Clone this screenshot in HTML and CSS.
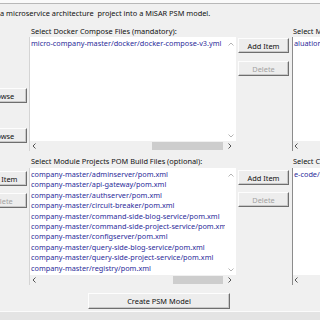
FILE: index.html
```html
<!DOCTYPE html>
<html lang="en">
<head>
<meta charset="utf-8">
<title>MiSAR PSM</title>
<link rel="stylesheet" href="styles.css">
</head>
<body>
<div class="window">
  <div class="topbar"></div>
  <p class="intro">a microservice architecture&nbsp; project into a MiSAR PSM model.</p>
  <div class="main">
    <div class="side">
      <button class="btn browse1">Browse</button>
      <button class="btn browse2">Browse</button>
      <button class="btn add2">Add Item</button>
      <button class="btn del2" disabled>Delete</button>
    </div>

    <div class="label l1">Select Docker Compose Files (mandatory):</div>
    <div class="listbox lb1">
      <ul class="items">
        <li>micro-company-master/docker/docker-compose-v3.yml</li>
      </ul>
      <div class="vscroll">
        <svg class="chev" width="6" height="4" viewBox="0 0 6 4"><path d="M0.5 3.5 L3 1 L5.5 3.5" fill="none" stroke="#b4b4b4" stroke-width="1"/></svg>
        <svg class="chev" width="6" height="4" viewBox="0 0 6 4"><path d="M0.5 0.5 L3 3 L5.5 0.5" fill="none" stroke="#b4b4b4" stroke-width="1"/></svg>
      </div>
      <div class="hscroll">
        <svg class="harrow" width="4" height="6" viewBox="0 0 4 6"><path d="M3.5 0.5 L1 3 L3.5 5.5" fill="none" stroke="#555" stroke-width="1"/></svg>
        <div class="track"><div class="thumb" style="margin-left:114px;width:71px"></div></div>
        <svg class="harrow" width="4" height="6" viewBox="0 0 4 6"><path d="M0.5 0.5 L3 3 L0.5 5.5" fill="none" stroke="#555" stroke-width="1"/></svg>
      </div>
    </div>

    <div class="label l2">Select Module Projects POM Build Files (optional):</div>
    <div class="listbox lb2">
      <ul class="items">
        <li>company-master/adminserver/pom.xml</li>
        <li>company-master/api-gateway/pom.xml</li>
        <li>company-master/authserver/pom.xml</li>
        <li>company-master/circuit-breaker/pom.xml</li>
        <li>company-master/command-side-blog-service/pom.xml</li>
        <li>company-master/command-side-project-service/pom.xml</li>
        <li>company-master/configserver/pom.xml</li>
        <li>company-master/query-side-blog-service/pom.xml</li>
        <li>company-master/query-side-project-service/pom.xml</li>
        <li>company-master/registry/pom.xml</li>
      </ul>
      <div class="vscroll">
        <svg class="chev" width="6" height="4" viewBox="0 0 6 4"><path d="M0.5 3.5 L3 1 L5.5 3.5" fill="none" stroke="#b4b4b4" stroke-width="1"/></svg>
        <svg class="chev" width="6" height="4" viewBox="0 0 6 4"><path d="M0.5 0.5 L3 3 L5.5 0.5" fill="none" stroke="#b4b4b4" stroke-width="1"/></svg>
      </div>
      <div class="hscroll">
        <svg class="harrow" width="4" height="6" viewBox="0 0 4 6"><path d="M3.5 0.5 L1 3 L3.5 5.5" fill="none" stroke="#555" stroke-width="1"/></svg>
        <div class="track"><div class="thumb" style="margin-left:135px;width:50px"></div></div>
        <svg class="harrow" width="4" height="6" viewBox="0 0 4 6"><path d="M0.5 0.5 L3 3 L0.5 5.5" fill="none" stroke="#555" stroke-width="1"/></svg>
      </div>
    </div>

    <div class="mid">
      <button class="btn m-add1">Add Item</button>
      <button class="btn m-del1" disabled>Delete</button>
      <button class="btn m-add2">Add Item</button>
      <button class="btn m-del2" disabled>Delete</button>
    </div>

    <div class="label r1">Select Microservice Evaluation Files:</div>
    <div class="listbox rlb rb1">
      <ul class="items">
        <li>aluation/metrics.csv</li>
      </ul>
      <div class="hscroll">
        <svg class="harrow" width="4" height="6" viewBox="0 0 4 6"><path d="M3.5 0.5 L1 3 L3.5 5.5" fill="none" stroke="#555" stroke-width="1"/></svg>
      </div>
    </div>

    <div class="label r2">Select Configuration Files:</div>
    <div class="listbox rlb rb2">
      <ul class="items">
        <li>e-code/src/main/resources</li>
      </ul>
      <div class="hscroll">
        <svg class="harrow" width="4" height="6" viewBox="0 0 4 6"><path d="M3.5 0.5 L1 3 L3.5 5.5" fill="none" stroke="#555" stroke-width="1"/></svg>
      </div>
    </div>
  </div>
  <div class="actions">
    <button class="btn create">Create PSM Model</button>
  </div>
  <div class="footer"></div>
</div>
</body>
</html>
```

FILE: styles.css
```css
* { box-sizing: border-box; }
html, body { margin: 0; padding: 0; }
body {
  width: 320px;
  height: 320px;
  overflow: hidden;
  background: #f0f0f0;
  font-family: "Noto Sans", "Open Sans", sans-serif;
  font-size: 7.4px;
  color: #111;
}
.window { width: 320px; height: 320px; display: flex; flex-direction: column; overflow: hidden; }
.topbar { height: 4px; background: #fafafa; border-bottom: 1px solid #b8b8b8; flex: none; }
.intro { margin: 0; height: 18px; line-height: 18px; padding-left: 0; white-space: nowrap; flex: none; }

.main {
  flex: none;
  display: grid;
  grid-template-columns: 29px 207px 56px 1fr;
  grid-template-rows: 15px 114px 17px 117px;
}
.side { grid-column: 1; grid-row: 1 / 5; display: flex; flex-direction: column; align-items: flex-start; }
.mid { grid-column: 3; grid-row: 1 / 5; display: flex; flex-direction: column; align-items: flex-start; }

.label { white-space: nowrap; overflow: hidden; padding-left: 2px; line-height: 15px; padding-top: 2px; }
.l1 { grid-column: 2; grid-row: 1; }
.l2 { grid-column: 2; grid-row: 3; line-height: 17px; padding-top: 2px; }
.r1 { grid-column: 4; grid-row: 1; padding-left: 1px; }
.r2 { grid-column: 4; grid-row: 3; line-height: 17px; padding-top: 2px; padding-left: 1px; }

.btn {
  font: inherit;
  color: #111;
  height: 15px;
  padding: 0;
  background: #ededed;
  border: 1px solid;
  border-color: #fdfdfd #6e6e6e #6e6e6e #fdfdfd;
  box-shadow: inset -1px -1px 0 #c8c8c8;
  white-space: nowrap;
  text-align: center;
  line-height: 12px;
}
.btn:disabled { color: #a2a2a2; }
.side .btn { width: 51px; margin-left: -24px; }
.browse1 { margin-top: 66px; }
.browse2 { margin-top: 25px; }
.add2 { margin-top: 28px; }
.del2 { margin-top: 7px; }
.mid .btn { width: 51px; margin-left: 2px; }
.m-add1 { margin-top: 16px; }
.m-del1 { margin-top: 8px; }
.m-add2 { margin-top: 94px; }
.m-del2 { margin-top: 7px; }

.listbox {
  display: grid;
  grid-template-columns: 1fr 11px;
  grid-template-rows: 1fr 10px;
  background: #fff;
  border-left: 1px solid #d4d4d4;
  overflow: hidden;
}
.lb1 { grid-column: 2; grid-row: 2; }
.lb2 { grid-column: 2; grid-row: 4; }
.rb1 { grid-column: 4; grid-row: 2; }
.rb2 { grid-column: 4; grid-row: 4; }
.rlb { grid-template-columns: 1fr; border-left: 1px solid #8c8c8c; }

.items {
  list-style: none;
  margin: 0;
  padding: 1px 0 0 1px;
  overflow: hidden;
  white-space: nowrap;
  color: #2c2c9a;
  font-size: 7.3px;
  line-height: 10.4px;
}
.vscroll {
  display: flex;
  flex-direction: column;
  justify-content: space-between;
  align-items: center;
  padding: 5px 0 3px;
  background: #fff;
}
.chev { display: block; }
.hscroll {
  grid-column: 1 / -1;
  display: flex;
  align-items: center;
  background: #f0f0f0;
  padding: 0 4px 0 2px;
  gap: 0;
}
.rlb .hscroll { margin-left: -1px; background: #f0f0f0; }
.harrow { display: block; flex: none; }
.track { flex: 1; height: 8px; padding: 0 2px; }
.thumb { height: 8px; background: #cdcdcd; }

.actions { flex: none; height: 26px; padding: 8px 0 0 88px; }
.create { width: 142px; height: 16px; }
.footer { flex: 1; background: #e4e4e4; border-top: 1px solid #fbfbfb; }
```
